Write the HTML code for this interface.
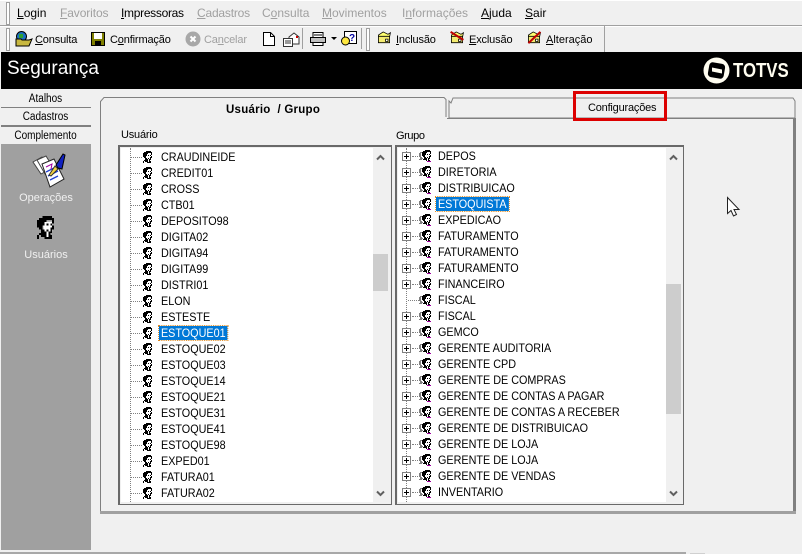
<!DOCTYPE html>
<html><head><meta charset="utf-8"><style>
html,body{margin:0;padding:0}
body{width:802px;height:554px;overflow:hidden;background:#f0f0f0;position:relative;font-family:"Liberation Sans",sans-serif;font-size:12px;color:#000}
.a{position:absolute}
.t{position:absolute;white-space:nowrap;line-height:14px}
.k{font-size:11px;letter-spacing:-.15px;top:33px}
.d{color:#a0a0a0}
.side{left:0;width:91px;text-align:center;font-size:11.5px;transform:scaleX(.87)}
.list{position:absolute;top:148px;height:354px;overflow:hidden;background:#fff}
.r{position:absolute;left:0;right:0;height:16px;line-height:16px;white-space:nowrap;font-size:12px}
.r span{position:absolute;left:40px;top:0;transform:scaleX(.9);transform-origin:0 0}
.r span.s{left:38px;top:1px;height:14px;line-height:14px;padding:0 2.2px;background:#0078d7;color:#fff;outline:1px dotted #e08a20}
.r i{position:absolute}
.l{left:10px;top:8px;width:11px;border-top:1px dotted #808080}
.m{left:14px;top:8px;width:6px;border-top:1px dotted #808080}
.b{left:4px;top:4px;width:7px;height:7px;border:1px solid #808080;background:#fff}
.b::before{content:"";position:absolute;left:1px;top:3px;width:5px;height:1px;background:#000}
.b::after{content:"";position:absolute;left:3px;top:1px;width:1px;height:5px;background:#000}
.u svg{left:22px;top:2px}
.g svg{left:21px;top:2px}
svg{position:absolute;overflow:visible}
.hd{stroke:#000;fill:none;stroke-width:1;shape-rendering:crispEdges}
</style></head><body>
<svg width="0" height="0"><defs>
<symbol id="p" viewBox="0 0 10 12" overflow="visible"><path fill="#fff" d="M3 3h5v5l-2 3h-2z"/><path class="hd" d="M3 .5h5M1 1.5h8M0 2.5h5M8 2.5h1M0 3.5h4M8 3.5h1M0 4.5h4M5 4.5h1M7 4.5h1M0 5.5h3M8 5.5h1M1 6.5h2M7 6.5h2M2 7.5h2M5 7.5h1M7 7.5h1M2 8.5h3M6 8.5h2M1 9.5h4M6 9.5h1M0 10.5h1M2 10.5h3M6 10.5h2M0 11.5h1M4 11.5h4"/></symbol>
<symbol id="q" viewBox="0 0 14 12" overflow="visible"><path stroke="#808080" fill="none" shape-rendering="crispEdges" d="M1 2.5h3M0 3.5h2M0 4.5h2M0 5.5h2M0 6.5h2M1 7.5h2M1 8.5h3M0 9.5h3"/><path class="hd" d="M6 .5h5M4 1.5h8M3 2.5h5M11 2.5h1M3 3.5h4M11 3.5h1M3 4.5h4M8 4.5h1M10 4.5h1M3 5.5h3M11 5.5h1M4 6.5h2M10 6.5h2M5 7.5h2M8 7.5h1M10 7.5h1M5 8.5h3M9 8.5h2M4 9.5h4M9 9.5h1M7 10.5h1M9 10.5h2"/><path stroke="#a000a0" shape-rendering="crispEdges" d="M8 11.5h4"/></symbol>
<symbol id="i" viewBox="0 0 20 18" overflow="visible"><path d="M3 6 9 2l6 3 3-2-1 5H3z" fill="#ffff70" stroke="#000"/><path d="M3 7.500h14v8H3z" fill="#f4ec70" stroke="#000"/><path d="M12 11h3v3h-3z" fill="#fff" stroke="#000"/></symbol>
</defs></svg>

<div class="a" style="left:0;top:0;width:802px;height:1px;background:#fff"></div>
<div class="a" style="left:0;top:25px;width:802px;height:1px;background:#a0a0a0"></div>
<div class="a" style="left:0;top:26px;width:802px;height:1px;background:#fff"></div>
<div class="a" style="left:6px;top:2px;width:2px;height:21px;border:1px solid #a0a0a0;background:#fff"></div>
<div class="a" style="left:6px;top:28px;width:2px;height:21px;border:1px solid #a0a0a0;background:#fff"></div>
<div class="t" style="left:17px;top:6px"><u>L</u>ogin</div>
<div class="t d" style="left:60px;top:6px;letter-spacing:-.1px"><u>F</u>avoritos</div>
<div class="t" style="left:121px;top:6px;letter-spacing:-.3px"><u>I</u>mpressoras</div>
<div class="t d" style="left:197px;top:6px;letter-spacing:-.2px"><u>C</u>adastros</div>
<div class="t d" style="left:262px;top:6px">C<u>o</u>nsulta</div>
<div class="t d" style="left:322px;top:6px"><u>M</u>ovimentos</div>
<div class="t d" style="left:402px;top:6px">I<u>n</u>formações</div>
<div class="t" style="left:481px;top:6px"><u>A</u>juda</div>
<div class="t" style="left:525px;top:6px"><u>S</u>air</div>

<svg style="left:15px;top:31px" width="18" height="16"><circle cx="6.5" cy="5.5" r="5" fill="#1c6fc0" stroke="#000"/><path d="M4 3h4v4H4z" fill="#30a030"/><path d="M1 8h5l1 1h7l3-1-3 7H1z" fill="#c8b840" stroke="#000"/></svg>
<div class="t k" style="left:35px"><u>C</u>onsulta</div>
<svg style="left:91px;top:32px" width="14" height="14"><path d="M.5.5h13v13H.5z" fill="#808000" stroke="#000"/><path d="M3 1h8v6H3z" fill="#fff"/><path d="M4 9h6v4H4z" fill="#000"/></svg>
<div class="t k" style="left:110px">C<u>o</u>nfirmação</div>
<svg style="left:185px;top:31px" width="16" height="16"><circle cx="8" cy="8" r="7.5" fill="#a8a8a8"/><path d="M5.500 5.500l5 5m0-5l-5 5" stroke="#fff" stroke-width="2"/></svg>
<div class="t k d" style="left:204px">Ca<u>n</u>celar</div>
<svg style="left:263px;top:32px" width="12" height="14"><path d="M.5.500h7l4 4v9H.5z" fill="#fff" stroke="#000"/><path d="M7.500.5v4h4" fill="none" stroke="#000"/></svg>
<svg style="left:283px;top:32px" width="17" height="15"><path d="M6 5l5-4 5 4v7H6z" fill="#fff" stroke="#333"/><path d="M.5 6.500h9v8h-9z" fill="#fff" stroke="#333"/><path d="M2 9h6M2 11h6" stroke="#333"/><path d="M13 4h2v2h-2z" fill="#c00"/></svg>
<div class="a" style="left:302px;top:28px;width:1px;height:21px;background:#a0a0a0"></div>
<svg style="left:310px;top:32px" width="17" height="14"><path d="M3 .5h10v5H3z" fill="#fff" stroke="#000"/><path d="M.5 5.500h15v5H.5z" fill="#c0c0c0" stroke="#000"/><path d="M3 10.500h10v3H3z" fill="#fff" stroke="#000"/><path d="M4 3h8" stroke="#000"/></svg>
<svg style="left:331px;top:37px" width="6" height="4"><path d="M0 0h6L3 3z" fill="#000"/></svg>
<svg style="left:341px;top:31px" width="16" height="16"><path d="M3.500.5h12v12h-12z" fill="#fff" stroke="#000"/><circle cx="4.500" cy="10" r="4" fill="#ffe840" stroke="#000"/><text x="8" y="10" font-size="10" font-weight="bold" fill="#0000a0" font-family="Liberation Sans">?</text></svg>
<div class="a" style="left:361px;top:28px;width:1px;height:21px;background:#a0a0a0"></div>
<div class="a" style="left:366px;top:28px;width:2px;height:21px;border:1px solid #a0a0a0;background:#fff"></div>
<svg style="left:376px;top:30px" width="16" height="15" viewBox="0 0 20 18"><use href="#i"/></svg>
<div class="t k" style="left:396px"><u>I</u>nclusão</div>
<svg style="left:449px;top:30px" width="16" height="15" viewBox="0 0 20 18"><use href="#i"/><path d="M2 2l16 10" stroke="#c00000" stroke-width="2.500"/></svg>
<div class="t k" style="left:469px"><u>E</u>xclusão</div>
<svg style="left:526px;top:30px" width="16" height="15" viewBox="0 0 20 18"><use href="#i"/><path d="M3 16 18 2" stroke="#c00000" stroke-width="2.500"/></svg>
<div class="t k" style="left:546px;letter-spacing:0"><u>A</u>lteração</div>
<div class="a" style="left:604px;top:26px;width:1px;height:26px;background:#a0a0a0"></div>

<div class="a" style="left:1px;top:52px;width:801px;height:37px;background:#000"></div>
<div class="t" style="left:7px;top:59px;font-size:19px;line-height:20px;color:#fff">Segurança</div>
<svg style="left:703px;top:57px" width="27" height="27"><circle cx="13.500" cy="13.500" r="13" fill="#fffdf0"/><rect x="5.500" y="6" width="16" height="15" rx="3.500" fill="#000" transform="rotate(10 13.500 13.500)"/><path d="M9 10.500l10 2v4l-10-2z" fill="#fffdf0"/></svg>
<div class="t" style="left:733px;top:60px;font-size:20px;line-height:22px;font-weight:bold;color:#fffdf0;transform-origin:0 0;transform:scaleX(.84)">TOTVS</div>

<div class="a" style="left:1px;top:89px;width:90px;height:18px;background:#f0f0f0;border-bottom:2px solid #808080"></div>
<div class="a" style="left:1px;top:108px;width:90px;height:17px;background:#f0f0f0;border-bottom:2px solid #808080"></div>
<div class="a" style="left:1px;top:127px;width:90px;height:17px;background:#f0f0f0"></div>
<div class="t side" style="top:92px">Atalhos</div>
<div class="t side" style="top:110px">Cadastros</div>
<div class="t side" style="top:129px">Complemento</div>
<div class="a" style="left:1px;top:144px;width:90px;height:406px;background:#a0a0a0"></div>
<svg style="left:32px;top:153px" width="33" height="35"><path d="M1 9 10 4l8 12-9 5z" fill="#fff" stroke="#444"/><path d="M5 7l9-4 8 13-9 5z" fill="#fff" stroke="#444"/><path d="M10 11 22 6l10 20-14 8z" fill="#fff" stroke="#222"/><path d="M14 19l10-5M16 23l10-5M18 27l8-4" stroke="#2040d0" stroke-width="1.300"/><path d="M14 14l6-3-1 5" stroke="#a000a0" fill="none"/><path d="M17 22l6-9 3 3-7 7z" fill="#f0d040" stroke="#333"/><path d="M24 12l7-11 2 1-3 14-4-1z" fill="#1020c0" stroke="#000"/></svg>
<div class="t" style="left:0;width:92px;text-align:center;top:191px;color:#f0f0f0;font-size:11px">Operações</div>
<svg style="left:37px;top:215px" width="19" height="25"><use href="#p" width="19" height="25"/></svg>
<div class="t" style="left:0;width:92px;text-align:center;top:248px;color:#f0f0f0;font-size:11px">Usuários</div>

<svg style="left:100px;top:97px" width="696" height="418">
<path d="M.5 417V4.500L4 1h340l2 2v18" fill="#f0f0f0"/>
<path d="M349 21V4l2 2 2-5h340l2 3v17z" fill="#f0f0f0" stroke="#808080"/>
<path d="M346 21.500H695" stroke="#808080"/>
<path d="M.5 415.500V4.500L4 .5h340l2 2v19" fill="none" stroke="#808080"/>
<path d="M694.500 21v394" stroke="#808080" stroke-width="3"/>
<path d="M0 415.500h696" stroke="#a0a0a0" stroke-width="3"/>
</svg>
<div class="a" style="left:101px;top:117px;width:346px;height:3px;background:#f0f0f0"></div>
<div class="t" style="left:226px;top:103px;font-size:11.5px;font-weight:bold;white-space:pre;letter-spacing:.25px">Usuário  / Grupo</div>
<div class="t" style="left:588px;top:101px;font-size:11px;letter-spacing:-.2px">Configurações</div>
<div class="a" style="left:573px;top:91px;width:88px;height:24px;border:3px solid #dc0000"></div>
<div class="t" style="left:121px;top:128px;font-size:11px;letter-spacing:-.2px">Usuário</div>
<div class="t" style="left:396px;top:129px;font-size:11px;letter-spacing:-.4px">Grupo</div>

<div class="a" style="left:118px;top:145px;width:271px;height:357px;border:1px solid #696969;border-top-width:2px;border-left-width:2px;background:#f0f0f0"></div>
<div class="list u" style="left:121px;width:252px">
<div class="a" style="left:9px;top:0;height:354px;border-left:1px dotted #808080"></div>
<div class="r" style="top:1px"><i class="l"></i><svg width="10" height="12"><use href="#p"/></svg><span>CRAUDINEIDE</span></div>
<div class="r" style="top:17px"><i class="l"></i><svg width="10" height="12"><use href="#p"/></svg><span>CREDIT01</span></div>
<div class="r" style="top:33px"><i class="l"></i><svg width="10" height="12"><use href="#p"/></svg><span>CROSS</span></div>
<div class="r" style="top:49px"><i class="l"></i><svg width="10" height="12"><use href="#p"/></svg><span>CTB01</span></div>
<div class="r" style="top:65px"><i class="l"></i><svg width="10" height="12"><use href="#p"/></svg><span>DEPOSITO98</span></div>
<div class="r" style="top:81px"><i class="l"></i><svg width="10" height="12"><use href="#p"/></svg><span>DIGITA02</span></div>
<div class="r" style="top:97px"><i class="l"></i><svg width="10" height="12"><use href="#p"/></svg><span>DIGITA94</span></div>
<div class="r" style="top:113px"><i class="l"></i><svg width="10" height="12"><use href="#p"/></svg><span>DIGITA99</span></div>
<div class="r" style="top:129px"><i class="l"></i><svg width="10" height="12"><use href="#p"/></svg><span>DISTRI01</span></div>
<div class="r" style="top:145px"><i class="l"></i><svg width="10" height="12"><use href="#p"/></svg><span>ELON</span></div>
<div class="r" style="top:161px"><i class="l"></i><svg width="10" height="12"><use href="#p"/></svg><span>ESTESTE</span></div>
<div class="r" style="top:177px"><i class="l"></i><svg width="10" height="12"><use href="#p"/></svg><span class="s">ESTOQUE01</span></div>
<div class="r" style="top:193px"><i class="l"></i><svg width="10" height="12"><use href="#p"/></svg><span>ESTOQUE02</span></div>
<div class="r" style="top:209px"><i class="l"></i><svg width="10" height="12"><use href="#p"/></svg><span>ESTOQUE03</span></div>
<div class="r" style="top:225px"><i class="l"></i><svg width="10" height="12"><use href="#p"/></svg><span>ESTOQUE14</span></div>
<div class="r" style="top:241px"><i class="l"></i><svg width="10" height="12"><use href="#p"/></svg><span>ESTOQUE21</span></div>
<div class="r" style="top:257px"><i class="l"></i><svg width="10" height="12"><use href="#p"/></svg><span>ESTOQUE31</span></div>
<div class="r" style="top:273px"><i class="l"></i><svg width="10" height="12"><use href="#p"/></svg><span>ESTOQUE41</span></div>
<div class="r" style="top:289px"><i class="l"></i><svg width="10" height="12"><use href="#p"/></svg><span>ESTOQUE98</span></div>
<div class="r" style="top:305px"><i class="l"></i><svg width="10" height="12"><use href="#p"/></svg><span>EXPED01</span></div>
<div class="r" style="top:321px"><i class="l"></i><svg width="10" height="12"><use href="#p"/></svg><span>FATURA01</span></div>
<div class="r" style="top:337px"><i class="l"></i><svg width="10" height="12"><use href="#p"/></svg><span>FATURA02</span></div>
</div>
<div class="a" style="left:373px;top:254px;width:15px;height:37px;background:#cdcdcd"></div>
<svg style="left:376px;top:154px" width="9" height="7"><path d="M1 5.500l3.500-3.500L8 5.500" fill="none" stroke="#606060" stroke-width="2"/></svg>
<svg style="left:376px;top:490px" width="9" height="7"><path d="M1 1.500L4.500 5 8 1.500" fill="none" stroke="#606060" stroke-width="2"/></svg>

<div class="a" style="left:395px;top:145px;width:286px;height:357px;border:1px solid #696969;border-top-width:2px;border-left-width:2px;background:#f0f0f0"></div>
<div class="list g" style="left:398px;width:268px">
<div class="a" style="left:8px;top:0;height:354px;border-left:1px dotted #808080"></div>
<div class="r" style="top:0"><i class="b"></i><i class="m"></i><svg width="14" height="12"><use href="#q"/></svg><span>DEPOS</span></div>
<div class="r" style="top:16px"><i class="b"></i><i class="m"></i><svg width="14" height="12"><use href="#q"/></svg><span>DIRETORIA</span></div>
<div class="r" style="top:32px"><i class="b"></i><i class="m"></i><svg width="14" height="12"><use href="#q"/></svg><span>DISTRIBUICAO</span></div>
<div class="r" style="top:48px"><i class="b"></i><i class="m"></i><svg width="14" height="12"><use href="#q"/></svg><span class="s">ESTOQUISTA</span></div>
<div class="r" style="top:64px"><i class="b"></i><i class="m"></i><svg width="14" height="12"><use href="#q"/></svg><span>EXPEDICAO</span></div>
<div class="r" style="top:80px"><i class="b"></i><i class="m"></i><svg width="14" height="12"><use href="#q"/></svg><span>FATURAMENTO</span></div>
<div class="r" style="top:96px"><i class="b"></i><i class="m"></i><svg width="14" height="12"><use href="#q"/></svg><span>FATURAMENTO</span></div>
<div class="r" style="top:112px"><i class="b"></i><i class="m"></i><svg width="14" height="12"><use href="#q"/></svg><span>FATURAMENTO</span></div>
<div class="r" style="top:128px"><i class="b"></i><i class="m"></i><svg width="14" height="12"><use href="#q"/></svg><span>FINANCEIRO</span></div>
<div class="r" style="top:144px"><i class="l"></i><svg width="14" height="12"><use href="#q"/></svg><span>FISCAL</span></div>
<div class="r" style="top:160px"><i class="b"></i><i class="m"></i><svg width="14" height="12"><use href="#q"/></svg><span>FISCAL</span></div>
<div class="r" style="top:176px"><i class="b"></i><i class="m"></i><svg width="14" height="12"><use href="#q"/></svg><span>GEMCO</span></div>
<div class="r" style="top:192px"><i class="b"></i><i class="m"></i><svg width="14" height="12"><use href="#q"/></svg><span>GERENTE AUDITORIA</span></div>
<div class="r" style="top:208px"><i class="b"></i><i class="m"></i><svg width="14" height="12"><use href="#q"/></svg><span>GERENTE CPD</span></div>
<div class="r" style="top:224px"><i class="b"></i><i class="m"></i><svg width="14" height="12"><use href="#q"/></svg><span>GERENTE DE COMPRAS</span></div>
<div class="r" style="top:240px"><i class="b"></i><i class="m"></i><svg width="14" height="12"><use href="#q"/></svg><span>GERENTE DE CONTAS A PAGAR</span></div>
<div class="r" style="top:256px"><i class="b"></i><i class="m"></i><svg width="14" height="12"><use href="#q"/></svg><span>GERENTE DE CONTAS A RECEBER</span></div>
<div class="r" style="top:272px"><i class="b"></i><i class="m"></i><svg width="14" height="12"><use href="#q"/></svg><span>GERENTE DE DISTRIBUICAO</span></div>
<div class="r" style="top:288px"><i class="b"></i><i class="m"></i><svg width="14" height="12"><use href="#q"/></svg><span>GERENTE DE LOJA</span></div>
<div class="r" style="top:304px"><i class="b"></i><i class="m"></i><svg width="14" height="12"><use href="#q"/></svg><span>GERENTE DE LOJA</span></div>
<div class="r" style="top:320px"><i class="b"></i><i class="m"></i><svg width="14" height="12"><use href="#q"/></svg><span>GERENTE DE VENDAS</span></div>
<div class="r" style="top:336px"><i class="b"></i><i class="m"></i><svg width="14" height="12"><use href="#q"/></svg><span>INVENTARIO</span></div>
</div>
<div class="a" style="left:666px;top:284px;width:15px;height:130px;background:#cdcdcd"></div>
<svg style="left:669px;top:154px" width="9" height="7"><path d="M1 5.500l3.500-3.500L8 5.500" fill="none" stroke="#606060" stroke-width="2"/></svg>
<svg style="left:669px;top:490px" width="9" height="7"><path d="M1 1.500L4.500 5 8 1.500" fill="none" stroke="#606060" stroke-width="2"/></svg>

<svg style="left:727px;top:197px" width="13" height="20"><path d="M.5.500v16l3.500-3 2.500 5.500 3-1.500-2.500-5H12z" fill="#fff" stroke="#222"/></svg>

<div class="a" style="left:0;top:552px;width:686px;height:2px;background:#a8a8a8"></div>
<div class="a" style="left:690px;top:553px;width:15px;height:1px;background:#d0d0d0"></div>
</body></html>
